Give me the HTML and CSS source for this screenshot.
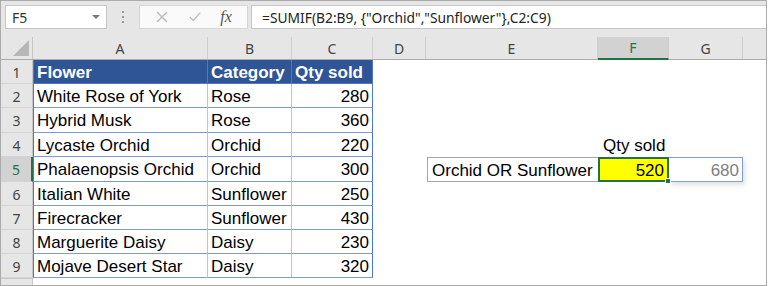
FILE: index.html
```html
<!DOCTYPE html>
<html lang="en">
<head>
    <meta charset="UTF-8">
    <title>SUMIF with OR criteria</title>
    <link rel="stylesheet" href="styles.css">
</head>
<body>
    <div class="sheet">
        <div class="toolbar">
            <div class="namebox">
                <span>F5</span>
                <span class="drop"></span>
            </div>
            <div class="grip"><i></i><i></i><i></i></div>
            <div class="fbuttons">
                <svg class="ico" viewBox="0 0 14 14"><line x1="2" y1="2" x2="12" y2="12" /><line x1="12" y1="2" x2="2" y2="12" /></svg>
                <svg class="ico" viewBox="0 0 16 14"><polyline points="2,7 6,11 14,2" /></svg>
                <span class="fx">fx</span>
            </div>
            <div class="formula">=SUMIF(B2:B9, {"Orchid","Sunflower"},C2:C9)</div>
        </div>

        <div class="colheads">
            <div class="corner"><span></span></div>
            <div class="hd ca">A</div>
            <div class="hd cb">B</div>
            <div class="hd cc">C</div>
            <div class="hd cd">D</div>
            <div class="hd ce">E</div>
            <div class="hd cf sel">F</div>
            <div class="hd cg">G</div>
            <div class="hd ch"></div>
        </div>

        <div class="row">
            <div class="rh">1</div>
            <div class="c ca t th">Flower</div>
            <div class="c cb t th">Category</div>
            <div class="c cc t th tl">Qty sold</div>
        </div>
        <div class="row">
            <div class="rh">2</div>
            <div class="c ca t">White Rose of York</div>
            <div class="c cb t">Rose</div>
            <div class="c cc t tl num">280</div>
        </div>
        <div class="row r25">
            <div class="rh">3</div>
            <div class="c ca t">Hybrid Musk</div>
            <div class="c cb t">Rose</div>
            <div class="c cc t tl num">360</div>
        </div>
        <div class="row">
            <div class="rh">4</div>
            <div class="c ca t">Lycaste Orchid</div>
            <div class="c cb t">Orchid</div>
            <div class="c cc t tl num">220</div>
            <div class="c cd"></div>
            <div class="c ce"></div>
            <div class="c cf label">Qty sold</div>
        </div>
        <div class="row r25">
            <div class="rh rsel">5</div>
            <div class="c ca t">Phalaenopsis Orchid</div>
            <div class="c cb t">Orchid</div>
            <div class="c cc t tl num">300</div>
            <div class="c cd"></div>
            <div class="c ce crit-cell"><div class="crit">Orchid OR Sunflower</div></div>
            <div class="c cf active num">520<span class="handle"></span></div>
            <div class="c cg preview num">680</div>
        </div>
        <div class="row">
            <div class="rh">6</div>
            <div class="c ca t">Italian White</div>
            <div class="c cb t">Sunflower</div>
            <div class="c cc t tl num">250</div>
        </div>
        <div class="row">
            <div class="rh">7</div>
            <div class="c ca t">Firecracker</div>
            <div class="c cb t">Sunflower</div>
            <div class="c cc t tl num">430</div>
        </div>
        <div class="row">
            <div class="rh">8</div>
            <div class="c ca t">Marguerite Daisy</div>
            <div class="c cb t">Daisy</div>
            <div class="c cc t tl num">230</div>
        </div>
        <div class="row">
            <div class="rh">9</div>
            <div class="c ca t">Mojave Desert Star</div>
            <div class="c cb t">Daisy</div>
            <div class="c cc t tl num">320</div>
        </div>
        <div class="row last">
            <div class="rh"></div>
        </div>
    </div>
</body>
</html>
```

FILE: styles.css
```css
* {
    box-sizing: border-box;
}

body {
    margin: 0;
    background: #fff;
}

.sheet {
    width: 767px;
    height: 286px;
    border: 1px solid #ababab;
    overflow: hidden;
    background: #fff;
    font-family: "Liberation Sans", Arial, sans-serif;
}

/* formula bar */
.toolbar {
    display: flex;
    align-items: flex-start;
    height: 36px;
    padding: 4px 0 0 4px;
    background: #e6e6e6;
    font-family: "Noto Sans", "Open Sans", sans-serif;
    font-size: 14px;
    color: #333;
}

.namebox {
    display: flex;
    align-items: center;
    justify-content: space-between;
    width: 102px;
    height: 24px;
    padding: 0 6px 0 6px;
    background: #fff;
    border: 1px solid #c6c6c6;
}

.drop {
    width: 0;
    height: 0;
    border-left: 4px solid transparent;
    border-right: 4px solid transparent;
    border-top: 4px solid #7a7a7a;
}

.grip {
    display: flex;
    flex-direction: column;
    align-items: center;
    justify-content: center;
    gap: 3px;
    width: 32px;
    height: 24px;
}

.grip i {
    width: 2px;
    height: 2px;
    background: #9a9a9a;
}

.fbuttons {
    display: flex;
    align-items: center;
    justify-content: space-around;
    width: 109px;
    height: 24px;
    padding: 0 6px;
    background: #fafafa;
    border: 1px solid #d6d6d6;
}

.ico {
    width: 14px;
    height: 14px;
    fill: none;
    stroke: #bcbcbc;
    stroke-width: 1.4;
}

.fx {
    font-family: "Liberation Serif", serif;
    font-style: italic;
    font-size: 16px;
    color: #555;
}

.formula {
    flex: 1;
    height: 24px;
    margin-left: 3px;
    padding: 2px 0 0 10px;
    background: #fff;
    border: 1px solid #c6c6c6;
    border-right: 0;
    white-space: nowrap;
    font-size: 13.8px;
    color: #222;
}

/* column headings */
.colheads {
    display: flex;
    height: 23px;
    background: #e6e6e6;
    border-bottom: 1px solid #ababab;
    font-family: "Noto Sans", "Open Sans", sans-serif;
    font-size: 14px;
    color: #444;
}

.corner {
    display: flex;
    align-items: flex-end;
    justify-content: flex-end;
    width: 32px;
    padding: 0 3px 3px 0;
    border-right: 1px solid #c6c6c6;
}

.corner span {
    width: 0;
    height: 0;
    border-left: 16px solid transparent;
    border-bottom: 16px solid #b7b7b7;
}

.hd {
    display: flex;
    align-items: center;
    justify-content: center;
    border-right: 1px solid #cdcdcd;
}

.hd.sel {
    background: #d2d2d2;
    color: #217346;
    border-bottom: 2px solid #217346;
    margin-bottom: -1px;
}

.ca { width: 175px; }
.cb { width: 84px; }
.cc { width: 81px; }
.cd { width: 53px; }
.ce { width: 172px; }
.cf { width: 71px; }
.cg { width: 74px; }
.ch { flex: 1; border-right: 0; }

/* rows */
.row {
    display: flex;
    height: 24px;
    font-size: 17px;
    color: #000;
}

.row.r25 {
    height: 25px;
}

.rh {
    display: flex;
    align-items: center;
    justify-content: center;
    width: 32px;
    padding-top: 1px;
    background: #e6e6e6;
    border-right: 1px solid #c6c6c6;
    border-bottom: 1px solid #d4d4d4;
    font-family: "Noto Sans", "Open Sans", sans-serif;
    font-size: 14px;
    color: #444;
}

.rh.rsel {
    background: #d2d2d2;
    color: #217346;
    border-right: 2px solid #217346;
}

.row.last .rh {
    border-top: 1px solid #c6c6c6;
}

.c {
    display: flex;
    align-items: center;
    padding: 2px 3px 0 3px;
    white-space: nowrap;
}

.num {
    justify-content: flex-end;
}

/* the flower table */
.t {
    border-bottom: 1px solid #7d9bd6;
    border-right: 1px solid #b4c6e7;
}

.t.ca {
    border-left: 1px solid #4f76c8;
}

.t.tl {
    border-right: 1px solid #4f76c8;
}

.t.th {
    background: #2f5597;
    color: #fff;
    font-weight: bold;
    border-bottom-color: #4f76c8;
    border-right-color: #4f76c8;
}

/* criteria block */
.label {
    padding-left: 5px;
}

.crit-cell {
    justify-content: flex-end;
    padding: 0;
}

.crit {
    display: flex;
    align-items: center;
    width: 171px;
    height: 25px;
    padding: 2px 0 0 4px;
    border: 1px solid #a6a6a6;
    border-right: 0;
}

.active {
    position: relative;
    background: #ffff00;
    border: 2px solid #217346;
    padding-right: 3px;
}

.handle {
    position: absolute;
    right: -4px;
    bottom: -4px;
    width: 6px;
    height: 6px;
    background: #217346;
    border: 1px solid #fff;
}

.preview {
    color: #7f7f7f;
    border: 1px solid #7f9fd8;
    border-left: 0;
    box-shadow: 2px 3px 5px rgba(0, 0, 0, 0.12);
}
```
